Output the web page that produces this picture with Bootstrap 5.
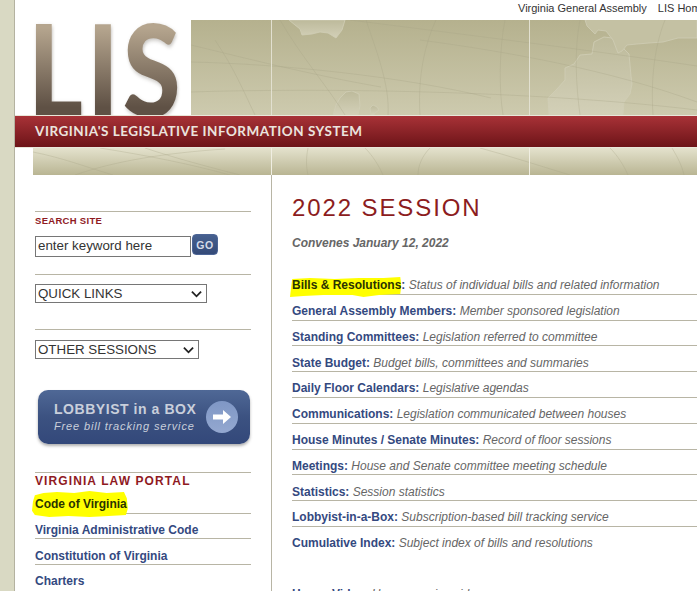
<!DOCTYPE html>
<html lang="en">
<head>
  <meta charset="UTF-8">
  <title>LIS - 2022 Session</title>
  <link rel="stylesheet" href="https://cdn.jsdelivr.net/npm/bootstrap@5.3.2/dist/css/bootstrap.min.css">
  <style>
    html, body { height: 591px; overflow: hidden; }
    body { font-family: "Liberation Sans", Arial, sans-serif; font-size: 12px; color: #666; background: #fff; }
    a { text-decoration: none; }

    .edge-strip { width: 15px; flex: 0 0 15px; background: #d9d9c3; border-right: 1px solid #b4b2a0; }
    .page-wrap { width: 682px; flex: 0 0 682px; overflow: hidden; }

    .top-links { height: 20px; padding-left: 503px; font-size: 11px; line-height: 17px; white-space: nowrap; gap: 11px; }
    .top-links a { color: #333; }

    .head-top { height: 95px; }
    .logo-box { width: 176px; flex: 0 0 176px; padding-left: 13px; background: #fff; }
    .logo-text { font-family: Lato, "Liberation Sans", sans-serif; font-weight: 900; font-size: 128px; line-height: 95px; letter-spacing: 5px; display: inline-block; transform: scaleX(.82); transform-origin: left top; background: linear-gradient(#b5a58e 8%, #5f5145 92%); -webkit-background-clip: text; background-clip: text; color: transparent; filter: drop-shadow(1px 2px 2px rgba(90, 80, 70, .35)); }
    .map-top, .map-low { display: block; flex: none; position: relative; }
    .red-band { height: 33px; padding-left: 20px; background: linear-gradient(#a83237, #6d1418); border-top: 1px solid #e9e7da; border-bottom: 1px solid #e9e7da; font-family: Lato, "Liberation Sans", sans-serif; font-weight: 700; font-size: 13.5px; letter-spacing: .5px; line-height: 31px; color: #ebe4df; white-space: nowrap; position: relative; }
    .low-row { height: 27px; padding-left: 18px; }

    .side-col { width: 257px; flex: 0 0 257px; height: 416px; padding: 36px 20px 0; border-right: 1px solid #b8b5a5; }
    .side-block { border-top: 1px solid #b8b5a5; }
    .block-search { height: 63px; padding-top: 3px; }
    .block-quick { height: 55px; padding-top: 9px; }
    .block-other { height: 143px; padding-top: 10px; }
    .search-label { font-size: 9.5px; font-weight: 700; line-height: 12px; letter-spacing: .3px; color: #8f1a1f; margin-bottom: 9px; }
    .kw-input { width: 156px; height: 21px; padding: 0 2px 2px; border: 1px solid #767676; border-radius: 0; font-size: 13.33px; line-height: 17px; color: #333; margin-top: 0; }
    .go-btn { width: 26px; height: 21px; margin: -2px 0 0 1px; padding: 0; border: 1px solid #4d6596; border-radius: 4px; background: linear-gradient(#46608f, #344a78); color: #d5dbe8; font-size: 10.5px; font-weight: 700; letter-spacing: .5px; line-height: 18px; }
    .plain-select { height: 19px; padding: 0 0 0 2px; border: 1px solid #767676; border-radius: 0; font-size: 13.33px; line-height: 17px; color: #333; background-color: #fff; background-image: url("data:image/svg+xml,%3Csvg xmlns='http://www.w3.org/2000/svg' viewBox='0 0 12 8'%3E%3Cpath d='M1 1.5l5 5 5-5' fill='none' stroke='%23222' stroke-width='2'/%3E%3C/svg%3E"); background-size: 11px 8px; background-position: right 4px center; }
    .sel-quick { width: 172px; }
    .sel-other { width: 164px; }

    .lobby-btn { width: 212px; height: 54px; margin: 31px 0 0 3px; padding: 0 0 0 16px; border-radius: 10px; background: linear-gradient(#4f6896, #3c5281 50%, #33487a); box-shadow: 0 2px 3px rgba(80, 80, 80, .45); color: #c9cfdb; }
    .lobby-title { font-size: 14px; font-weight: 700; letter-spacing: .55px; line-height: 16px; }
    .lobby-sub { font-size: 11px; font-style: italic; letter-spacing: .85px; line-height: 14px; margin-top: 2px; }
    .lobby-round { width: 32px; height: 32px; margin-left: auto; margin-right: 12px; border-radius: 50%; background: linear-gradient(#7f97c5, #94a8d0); }

    .portal-head { height: 15px; font-size: 12px; font-weight: 700; letter-spacing: 1.1px; line-height: 16px; color: #8f1a1f; white-space: nowrap; }
    .portal-list .list-group-item { height: 25.7px; padding: 9.300px 0 0; border-color: #b8b5a5; background: transparent; font-weight: 700; line-height: 14px; }
    .portal-list { margin-bottom: 0; }
    .blue-link { color: #34497f; font-weight: 700; }

    .main-col { width: 425px; flex: 0 0 425px; padding: 0 0 0 20px; }
    .session-title { margin: 20px 0 0; font-family: "Liberation Sans", Arial, sans-serif; font-size: 24px; font-weight: 400; line-height: 26px; letter-spacing: 1.9px; color: #8c1c20; }
    .convenes { margin: 15px 0 0; font-size: 12px; font-weight: 700; font-style: italic; line-height: 14px; color: #666; }
    .session-list { margin-top: 19px; width: 500px; border-radius: 0; overflow: visible; }
    .session-list .list-group-item { height: 25.8px; padding: 9.300px 0 0; border-color: #b8b5a5; background: transparent; font-style: italic; line-height: 14px; color: #666; white-space: nowrap; }
    .session-list .blue-link { font-style: normal; }
    .video-row { margin-top: 34px; line-height: 14px; font-style: italic; white-space: nowrap; }
    .video-row .blue-link { font-style: normal; }

    .hi-mark { position: relative; z-index: 0; color: #2a3300; font-weight: 700; }
    .hi-blob { position: absolute; z-index: -1; display: block; }
    .blob-code { left: -3px; right: -1px; top: -7px; bottom: -6px; width: calc(100% + 4px); height: calc(100% + 13px); }
    .blob-bills { left: -2px; right: 0; top: -1px; bottom: -5px; width: calc(100% + 2px); height: calc(100% + 6px); }
  </style>
</head>
<body class="d-flex">
  <div class="edge-strip"></div>
  <div class="page-wrap">
    <div class="top-links d-flex">
      <a href="#">Virginia General Assembly</a>
      <a href="#">LIS Home</a>
    </div>

    <div class="head-top d-flex">
      <div class="logo-box"><span class="logo-text">LIS</span></div>
      <svg class="map-top" width="506" height="95" viewBox="191 20 506 95">
        <defs>
          <linearGradient id="mapBg" x1="0" y1="0" x2="0" y2="1"><stop offset="0" stop-color="#b5b18e"/><stop offset="1" stop-color="#cdcaae"/></linearGradient>
          <linearGradient id="landBg" x1="0" y1="0" x2="0" y2="1"><stop offset="0" stop-color="#bdba9b"/><stop offset="1" stop-color="#d3d0b8"/></linearGradient>
        </defs>
        <rect x="191" y="20" width="506" height="95" fill="url(#mapBg)"/>
        <g fill="url(#landBg)" stroke="#d0ceb6" stroke-width=".8">
          <path d="M289 20l6 5 5 4 2 6 10-1 8-2 8 1 8 5 6-8 3-10z"/>
          <path d="M333 115l3-10 4-7 6-6 6-1 7 3 1 12-2 9z"/>
          <path d="M371 115l-1-7 3-3 4 2 2 3-4 3-1 2z"/>
          <path d="M549 115l-1-17 9-9 8-9 0-12 9-4 6-9 12-1 2-12 10-5 16 2 4 10 5 5 2 22 1 8-2 10-6 8-1 13z"/>
        </g>
        <path d="M585 20l2 6 5 5 3 3 3-4 8 1 7 9 5 13 4-2 5-6 10-1 12-1 14-1 15-4 19 0v-38z" fill="#c4c1a3" stroke="#cfcdb5" stroke-width=".8"/>
        <g fill="none" stroke="#a6a283" stroke-opacity=".3" stroke-width="1">
          <path d="M191 45c50 12 120 30 190 42"/>
          <path d="M191 62c90 2 210 14 300 36"/>
          <path d="M191 92c120-4 340-2 506 18"/>
          <path d="M215 40c20 30 28 50 40 75"/>
          <path d="M280 20c20 35 50 70 65 95"/>
          <path d="M366 20c10 30 24 65 22 95"/>
          <path d="M436 20c-14 30-18 65-16 95"/>
          <path d="M505 20c-6 30-6 70-2 95"/>
          <path d="M580 20c-6 30-4 65 0 95"/>
          <path d="M665 20c-12 30-14 65-12 95"/>
          <path d="M350 20c110 14 240 30 347 46"/>
          <path d="M420 40c90 12 190 30 277 62"/>
        </g>
        <path d="M271.500 20v95M529.500 20v95" stroke="#e2e0d0" stroke-width="1"/>
      </svg>
    </div>

    <div class="red-band">VIRGINIA'S LEGISLATIVE INFORMATION SYSTEM</div>

    <div class="low-row d-flex">
      <svg class="map-low" width="664" height="27" viewBox="33 148 664 27">
        <defs>
          <linearGradient id="lowBg" x1="0" y1="0" x2="0" y2="1"><stop offset="0" stop-color="#e4e2cd"/><stop offset="1" stop-color="#b9b593"/></linearGradient>
        </defs>
        <rect x="33" y="148" width="664" height="27" fill="url(#lowBg)"/>
        <g fill="none" stroke="#a6a283" stroke-opacity=".3" stroke-width="1">
          <path d="M33 152c30 6 50 14 80 23"/>
          <path d="M75 175c40-14 90-22 150-26"/>
          <path d="M100 148c50 8 90 16 130 27"/>
          <path d="M145 148c30 10 60 18 95 27"/>
          <path d="M308 148c-2 10-2 18 0 27"/>
          <path d="M365 148c8 8 14 18 18 27"/>
          <path d="M430 148c-8 8-12 18-12 27"/>
          <path d="M480 148c30 8 60 18 90 27"/>
          <path d="M610 148c8 8 14 18 18 27"/>
          <path d="M672 148c6 10 10 18 12 27"/>
        </g>
        <path d="M271.500 148v27M529.500 148v27" stroke="#f0eee2" stroke-width="1"/>
      </svg>
    </div>

    <div class="d-flex">
      <div class="side-col">
        <div class="side-block block-search">
          <div class="search-label">SEARCH SITE</div>
          <form class="d-flex align-items-start">
            <input type="text" class="kw-input" value="enter keyword here">
            <button type="button" class="btn go-btn">GO</button>
          </form>
        </div>
        <div class="side-block block-quick">
          <select class="form-select plain-select sel-quick"><option>QUICK LINKS</option></select>
        </div>
        <div class="side-block block-other">
          <select class="form-select plain-select sel-other"><option>OTHER SESSIONS</option></select>
          <a href="#" class="lobby-btn d-flex align-items-center">
            <div>
              <div class="lobby-title">LOBBYIST in a BOX</div>
              <div class="lobby-sub">Free bill tracking service</div>
            </div>
            <div class="lobby-round d-flex align-items-center justify-content-center">
              <svg width="20" height="16" viewBox="0 0 20 16"><path d="M1 5.500h10V1l8 7-8 7v-4.500H1z" fill="#fff"/></svg>
            </div>
          </a>
        </div>
        <div class="side-block">
          <div class="portal-head">VIRGINIA LAW PORTAL</div>
          <ul class="list-group list-group-flush portal-list">
            <li class="list-group-item"><a href="#" class="blue-link"><span class="hi-mark"><svg class="hi-blob blob-code" viewBox="0 0 100 26" preserveAspectRatio="none"><path d="M3 5L12 3 26 2 44 3 60 1 78 3 96 2 99 8 100 18 98 24 80 25 60 26 38 25 18 26 3 24 0 20 1 11z" fill="#ffff00"/></svg>Code of Virginia</span></a></li>
            <li class="list-group-item"><a href="#" class="blue-link">Virginia Administrative Code</a></li>
            <li class="list-group-item"><a href="#" class="blue-link">Constitution of Virginia</a></li>
            <li class="list-group-item"><a href="#" class="blue-link">Charters</a></li>
          </ul>
        </div>
      </div>

      <div class="main-col">
        <h1 class="session-title">2022 SESSION</h1>
        <p class="convenes">Convenes January 12, 2022</p>
        <ul class="list-group list-group-flush session-list">
          <li class="list-group-item"><a href="#" class="blue-link"><span class="hi-mark"><svg class="hi-blob blob-bills" viewBox="0 0 100 20" preserveAspectRatio="none"><path d="M2 2L18 1 40 2 62 1 84 1 99 0 100 8 99 17 80 18 66 20 56 18 30 18 12 19 0 20 1 10z" fill="#ffff00"/></svg>Bills &amp; Resolutions</span>:</a> Status of individual bills and related information</li>
          <li class="list-group-item"><a href="#" class="blue-link">General Assembly Members:</a> Member sponsored legislation</li>
          <li class="list-group-item"><a href="#" class="blue-link">Standing Committees:</a> Legislation referred to committee</li>
          <li class="list-group-item"><a href="#" class="blue-link">State Budget:</a> Budget bills, committees and summaries</li>
          <li class="list-group-item"><a href="#" class="blue-link">Daily Floor Calendars:</a> Legislative agendas</li>
          <li class="list-group-item"><a href="#" class="blue-link">Communications:</a> Legislation communicated between houses</li>
          <li class="list-group-item"><a href="#" class="blue-link">House Minutes / Senate Minutes:</a> Record of floor sessions</li>
          <li class="list-group-item"><a href="#" class="blue-link">Meetings:</a> House and Senate committee meeting schedule</li>
          <li class="list-group-item"><a href="#" class="blue-link">Statistics:</a> Session statistics</li>
          <li class="list-group-item"><a href="#" class="blue-link">Lobbyist-in-a-Box:</a> Subscription-based bill tracking service</li>
          <li class="list-group-item"><a href="#" class="blue-link">Cumulative Index:</a> Subject index of bills and resolutions</li>
        </ul>
        <div class="video-row"><a href="#" class="blue-link">House Video:</a> House session video</div>
      </div>
    </div>
  </div>
  <script src="https://cdn.jsdelivr.net/npm/bootstrap@5.3.2/dist/js/bootstrap.bundle.min.js"></script>
</body>
</html>
